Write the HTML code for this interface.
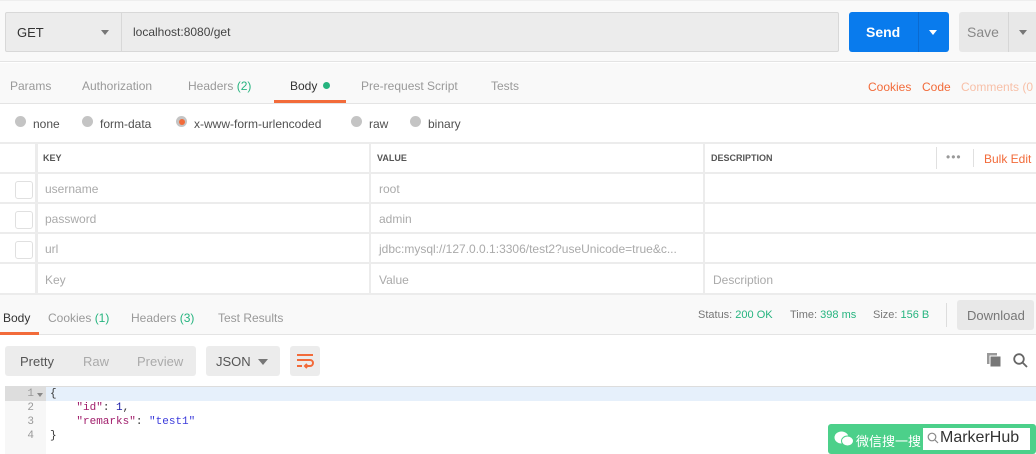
<!DOCTYPE html><html><head><meta charset="utf-8"><style>
*{margin:0;padding:0;box-sizing:border-box}
body{width:1036px;height:454px;overflow:hidden;background:#fff;font-family:"Liberation Sans",sans-serif;font-size:12px;color:#505050;position:relative}
.a{position:absolute}
.t{position:absolute;white-space:nowrap}
.g{color:#26b47f}
.rad{position:absolute;width:11px;height:11px;border-radius:50%;background:#c4c4c4}
.hl{position:absolute;background:#ececec}
.tri{position:absolute;width:0;height:0;border-left:4px solid transparent;border-right:4px solid transparent;border-top:5px solid #777}
</style></head><body>
<div class="a" style="left:0;top:0;width:1036px;height:62px;background:#f9f9f9;border-top:1px solid #eee;border-bottom:1px solid #e4e4e4"></div>
<div class="a" style="left:5px;top:12px;width:834px;height:40px;background:#ececec;border:1px solid #d8d8d8;border-radius:2px"></div>
<div class="a" style="left:121px;top:13px;width:1px;height:38px;background:#d8d8d8"></div>
<div class="t" style="left:17px;top:25px;font-size:13px;color:#333">GET</div>
<div class="tri" style="left:101px;top:30px"></div>
<div class="t" style="left:133px;top:25px;font-size:12px;color:#444">localhost:8080/get</div>
<div class="a" style="left:849px;top:12px;width:100px;height:40px;background:#097bed;border-radius:3px"></div>
<div class="a" style="left:918px;top:12px;width:1px;height:40px;background:#0a6ad0"></div>
<div class="t" style="left:866px;top:24px;font-size:14px;font-weight:bold;color:#fff">Send</div>
<div class="tri" style="left:929px;top:30px;border-top-color:#fff"></div>
<div class="a" style="left:959px;top:12px;width:80px;height:40px;background:#e8e8e8;border-radius:3px"></div>
<div class="a" style="left:1008px;top:12px;width:1px;height:40px;background:#d6d6d6"></div>
<div class="t" style="left:967px;top:24px;font-size:14px;color:#888">Save</div>
<div class="tri" style="left:1019px;top:30px"></div>

<div class="a" style="left:0;top:63px;width:1036px;height:41px;background:#f9f9f9;border-bottom:1px solid #e4e4e4"></div>
<div class="t" style="left:10px;top:79px;color:#999">Params</div>
<div class="t" style="left:82px;top:79px;color:#999">Authorization</div>
<div class="t" style="left:188px;top:79px;color:#999">Headers <span class="g">(2)</span></div>
<div class="t" style="left:290px;top:79px;color:#333">Body</div>
<div class="a" style="left:323px;top:82px;width:7px;height:7px;border-radius:50%;background:#26b47f"></div>
<div class="a" style="left:274px;top:100px;width:72px;height:3px;background:#f26b3a"></div>
<div class="t" style="left:361px;top:79px;color:#999">Pre-request Script</div>
<div class="t" style="left:491px;top:79px;color:#999">Tests</div>
<div class="t" style="left:868px;top:80px;color:#f26b3a">Cookies</div>
<div class="t" style="left:922px;top:80px;color:#f26b3a">Code</div>
<div class="t" style="left:961px;top:80px;color:#f8c0a8">Comments (0</div>

<div class="rad" style="left:15px;top:116px"></div><div class="t" style="left:33px;top:117px">none</div>
<div class="rad" style="left:82px;top:116px"></div><div class="t" style="left:100px;top:117px">form-data</div>
<div class="rad" style="left:176px;top:116px"></div><div class="a" style="left:179px;top:119px;width:6px;height:6px;border-radius:50%;background:#f26b3a"></div><div class="t" style="left:194px;top:117px">x-www-form-urlencoded</div>
<div class="rad" style="left:351px;top:116px"></div><div class="t" style="left:369px;top:117px">raw</div>
<div class="rad" style="left:410px;top:116px"></div><div class="t" style="left:428px;top:117px">binary</div>

<div class="hl" style="left:0;top:142px;width:1036px;height:2px"></div>
<div class="hl" style="left:0;top:172px;width:1036px;height:2px"></div>
<div class="hl" style="left:0;top:202px;width:1036px;height:2px"></div>
<div class="hl" style="left:0;top:232px;width:1036px;height:2px"></div>
<div class="hl" style="left:0;top:262px;width:1036px;height:2px"></div>
<div class="a" style="left:0;top:293px;width:1036px;height:42px;background:#f9f9f9;border-top:2px solid #ececec;border-bottom:1px solid #e4e4e4"></div>
<div class="hl" style="left:35px;top:142px;width:3px;height:151px"></div>
<div class="hl" style="left:369px;top:142px;width:2px;height:151px"></div>
<div class="hl" style="left:703px;top:142px;width:2px;height:151px"></div>
<div class="a" style="left:936px;top:147px;width:1px;height:22px;background:#e0e0e0"></div>
<div class="a" style="left:973px;top:149px;width:1px;height:18px;background:#e0e0e0"></div>
<div class="t" style="left:43px;top:153px;font-size:9px;font-weight:bold;color:#555">KEY</div>
<div class="t" style="left:377px;top:153px;font-size:9px;font-weight:bold;color:#555">VALUE</div>
<div class="t" style="left:711px;top:153px;font-size:9px;font-weight:bold;color:#555">DESCRIPTION</div>
<div class="t" style="left:946px;top:150px;font-size:12px;color:#999;letter-spacing:1px">•••</div>
<div class="t" style="left:984px;top:152px;color:#f26b3a">Bulk Edit</div>
<div class="a" style="left:15px;top:181px;width:18px;height:18px;border:1px solid #e0e0e0;border-radius:3px"></div>
<div class="a" style="left:15px;top:211px;width:18px;height:18px;border:1px solid #e0e0e0;border-radius:3px"></div>
<div class="a" style="left:15px;top:241px;width:18px;height:18px;border:1px solid #e0e0e0;border-radius:3px"></div>
<div class="t" style="left:45px;top:182px;color:#aaa">username</div><div class="t" style="left:379px;top:182px;color:#aaa">root</div>
<div class="t" style="left:45px;top:212px;color:#aaa">password</div><div class="t" style="left:379px;top:212px;color:#aaa">admin</div>
<div class="t" style="left:45px;top:242px;color:#aaa">url</div><div class="t" style="left:379px;top:242px;color:#aaa">jdbc:mysql://127.0.0.1:3306/test2?useUnicode=true&amp;c...</div>
<div class="t" style="left:45px;top:273px;color:#aaa">Key</div><div class="t" style="left:379px;top:273px;color:#aaa">Value</div><div class="t" style="left:713px;top:273px;color:#aaa">Description</div>

<div class="t" style="left:3px;top:311px;color:#333">Body</div>
<div class="a" style="left:0;top:332px;width:39px;height:3px;background:#f26b3a"></div>
<div class="t" style="left:48px;top:311px;color:#999">Cookies <span class="g">(1)</span></div>
<div class="t" style="left:131px;top:311px;color:#999">Headers <span class="g">(3)</span></div>
<div class="t" style="left:218px;top:311px;color:#999">Test Results</div>
<div class="t" style="left:698px;top:309px;font-size:11px;color:#777">Status: <span class="g">200 OK</span></div>
<div class="t" style="left:790px;top:309px;font-size:11px;color:#777">Time: <span class="g">398 ms</span></div>
<div class="t" style="left:873px;top:309px;font-size:11px;color:#777">Size: <span class="g">156 B</span></div>
<div class="a" style="left:946px;top:303px;width:1px;height:24px;background:#ddd"></div>
<div class="a" style="left:957px;top:300px;width:77px;height:30px;background:#e8e8e8;border-radius:3px"></div>
<div class="t" style="left:967px;top:308px;font-size:13px;color:#777">Download</div>

<div class="a" style="left:5px;top:346px;width:191px;height:30px;background:#ececec;border-radius:3px"></div>
<div class="t" style="left:20px;top:354px;font-size:13px;color:#555">Pretty</div>
<div class="t" style="left:83px;top:354px;font-size:13px;color:#aaa">Raw</div>
<div class="t" style="left:137px;top:354px;font-size:13px;color:#aaa">Preview</div>
<div class="a" style="left:206px;top:346px;width:74px;height:30px;background:#ececec;border-radius:3px"></div>
<div class="t" style="left:216px;top:354px;font-size:13px;color:#555">JSON</div>
<div class="tri" style="left:258px;top:359px;border-left-width:5px;border-right-width:5px;border-top-width:6px"></div>
<div class="a" style="left:290px;top:346px;width:30px;height:30px;background:#ececec;border-radius:3px"></div>
<svg class="a" style="left:296px;top:353px" width="18" height="16" viewBox="0 0 18 16" fill="none" stroke="#f26b3a" stroke-width="2"><path d="M1 2h16M1 7h13a3 3 0 0 1 0 6H9M11 11l-2 2 2 2M1 13h5"/></svg>
<svg class="a" style="left:987px;top:353px" width="15" height="15" viewBox="0 0 15 15"><rect x="0" y="0" width="10" height="11" fill="#999"/><rect x="3" y="3" width="11" height="11" fill="#777" stroke="#fff"/></svg>
<svg class="a" style="left:1013px;top:353px" width="15" height="15" viewBox="0 0 15 15" fill="none" stroke="#666" stroke-width="1.8"><circle cx="6" cy="6" r="4.8"/><path d="M9.5 9.5l4.5 4.5"/></svg>

<div class="a" style="left:5px;top:386px;width:1031px;height:1px;background:#ddd"></div>
<div class="a" style="left:5px;top:387px;width:41px;height:67px;background:#f7f7f7"></div>
<div class="a" style="left:5px;top:387px;width:41px;height:14px;background:#ddd"></div>
<div class="a" style="left:46px;top:387px;width:990px;height:14px;background:#e6f0fb"></div>
<div style="position:absolute;left:0;top:387px;font-family:'Liberation Mono',monospace;font-size:11px;line-height:14px;color:#999;text-align:right;width:34px">1<br>2<br>3<br>4</div>
<div class="tri" style="left:37px;top:393px;border-left-width:3px;border-right-width:3px;border-top-width:4px;border-top-color:#888"></div>
<div style="position:absolute;left:50px;top:387px;font-family:'Liberation Mono',monospace;font-size:11px;line-height:14px;color:#333;white-space:pre">{
    <span style="color:#a11d6b">"id"</span>: <span style="color:#1a1aa6">1</span>,
    <span style="color:#a11d6b">"remarks"</span>: <span style="color:#3b3bdb">"test1"</span>
}</div>

<div class="a" style="left:828px;top:424px;width:208px;height:30px;background:#4cd08a;border-radius:3px"></div>
<svg class="a" style="left:834px;top:431px" width="20" height="16" viewBox="0 0 20 16"><ellipse cx="7.5" cy="6.5" rx="7" ry="6" fill="#fff"/><ellipse cx="13.5" cy="10" rx="6" ry="5" fill="#fff" stroke="#4cd08a" stroke-width="1"/></svg>
<div class="t" style="left:856px;top:431px;font-size:13px;color:#fff;font-family:'Liberation Sans','Noto Sans CJK SC',sans-serif">微信搜一搜</div>
<div class="a" style="left:923px;top:428px;width:107px;height:22px;background:#fff"></div>
<svg class="a" style="left:927px;top:432px" width="12" height="12" viewBox="0 0 12 12" fill="none" stroke="#888" stroke-width="1.2"><circle cx="5" cy="5" r="3.8"/><path d="M8 8l3 3"/></svg>
<div class="t" style="left:940px;top:429px;font-size:16px;color:#333">MarkerHub</div>
</body></html>
